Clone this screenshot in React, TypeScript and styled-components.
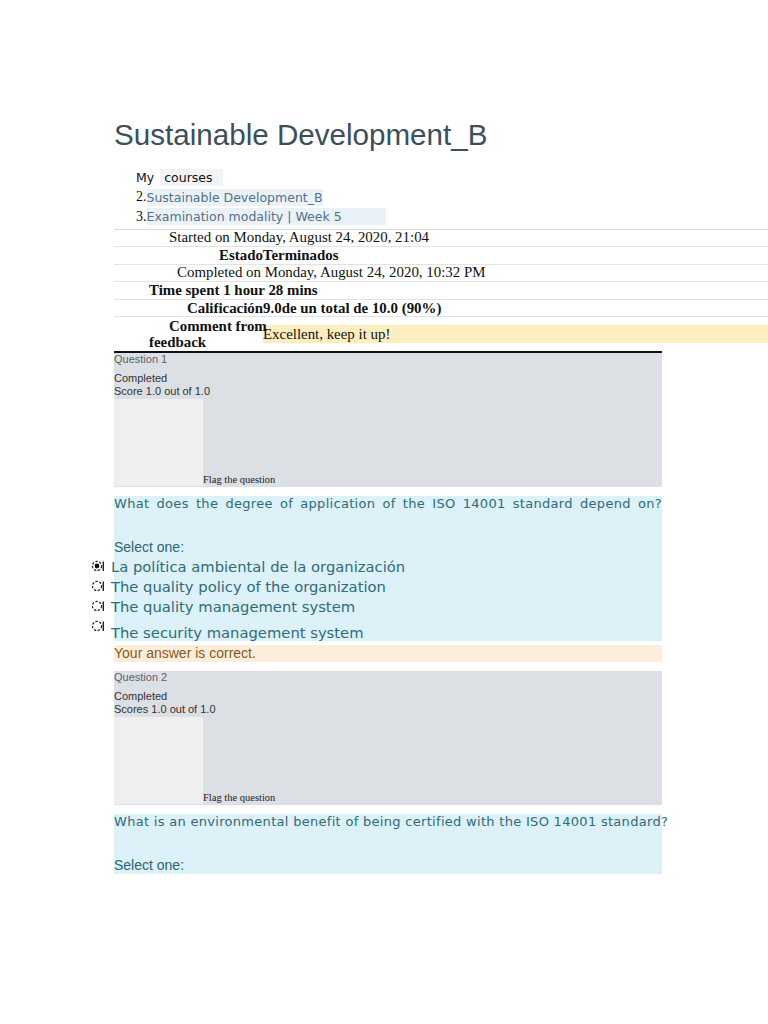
import React from 'react'
import styled, { createGlobalStyle } from 'styled-components'

const GlobalStyle = createGlobalStyle`
  html, body {
    margin: 0;
    padding: 0;
    background: #ffffff;
  }
  body {
    font-family: "Liberation Serif", "Times New Roman", serif;
  }
`

const Page = styled.div`
  width: 768px;
  min-height: 1024px;
  padding: 117px 0 0 114px;
  box-sizing: border-box;
`

const Title = styled.h1`
  margin: 0 0 15px 0;
  font-family: "Liberation Sans", Arial, sans-serif;
  font-weight: 400;
  font-size: 29.6px;
  line-height: 36px;
  color: #3c4f5a;
`

const Crumbs = styled.ol`
  list-style: none;
  margin: 0;
  padding: 0 0 2px 22px;
  border-bottom: 1px solid #dcdcdc;
`

const Crumb = styled.li`
  display: flex;
  align-items: center;
  height: 19.5px;
  font-family: "DejaVu Sans", Verdana, sans-serif;
  font-size: 12.5px;
  color: #111;
`

const CrumbNum = styled.span`
  font-family: "Liberation Serif", serif;
  font-size: 14px;
  color: #111;
`

const CrumbLink = styled.span<{ $pad?: number; $plain?: boolean }>`
  background: ${p => (p.$plain ? '#f1f3f5' : '#eaf2f7')};
  color: ${p => (p.$plain ? '#111' : '#52718c')};
  padding: 1px ${p => p.$pad ?? 0}px 1px ${p => (p.$plain ? 4 : 0)}px;
  margin-left: ${p => (p.$plain ? 6 : 0)}px;
`

const Summary = styled.div`
  display: flex;
  flex-direction: column;
`

const Row = styled.div<{ $indent: number; $bold?: boolean }>`
  display: flex;
  align-items: center;
  height: 16.6px;
  padding-left: ${p => p.$indent}px;
  border-bottom: 1px solid #e3e3e3;
  font-size: 14.9px;
  font-weight: ${p => (p.$bold ? 700 : 400)};
  color: #111;
  white-space: nowrap;
`

const CommentRow = styled.div`
  display: flex;
  align-items: center;
  padding-left: 35px;
  height: 34px;
`

const CommentLabel = styled.div`
  position: relative;
  z-index: 1;
  width: 114px;
  font-size: 14.9px;
  font-weight: 700;
  line-height: 16px;
  text-indent: 20px;
  white-space: nowrap;
  color: #111;
`

const CommentValue = styled.div`
  flex: 1;
  background: #fdeec0;
  height: 18px;
  line-height: 18px;
  font-size: 14.9px;
  color: #111;
`

const QuestionInfo = styled.div<{ $rule?: boolean }>`
  width: 548px;
  height: 134px;
  background: #dcdfe3;
  border-top: ${p => (p.$rule ? '2px solid #111' : 'none')};
  display: flex;
  flex-direction: column;
  font-family: "Liberation Sans", Arial, sans-serif;
  font-size: 11px;
  color: #333;
`

const QNumber = styled.div`
  color: #5b6266;
  line-height: 12px;
  margin-bottom: 7px;
`

const InfoLine = styled.div`
  line-height: 13px;
`

const FlagRow = styled.div`
  display: flex;
  align-items: flex-end;
  margin-top: 1px;
`

const FlagBox = styled.div`
  width: 89px;
  height: 87px;
  background: #efefef;
`

const FlagText = styled.div`
  font-family: "Liberation Serif", serif;
  font-size: 10.5px;
  color: #222;
  line-height: 12px;
`

const QText = styled.div<{ $height: number }>`
  width: 548px;
  height: ${p => p.$height}px;
  margin-top: 9px;
  background: #ddf1f8;
  display: flex;
  flex-direction: column;
`

const Prompt = styled.div<{ $justify?: boolean }>`
  font-family: "DejaVu Sans", Verdana, sans-serif;
  font-size: 13px;
  letter-spacing: 0.3px;
  color: #2f6b7b;
  line-height: 16px;
  white-space: ${p => (p.$justify ? 'normal' : 'nowrap')};
  text-align: ${p => (p.$justify ? 'justify' : 'left')};
  text-align-last: ${p => (p.$justify ? 'justify' : 'auto')};
`

const SelectOne = styled.div`
  font-family: "Liberation Sans", Arial, sans-serif;
  font-size: 14px;
  color: #2c6474;
  margin-top: 27px;
  line-height: 16px;
`

const Options = styled.div`
  margin-left: -24px;
  display: flex;
  flex-direction: column;
  padding-top: 3px;
`

const Option = styled.div<{ $low?: boolean }>`
  display: flex;
  align-items: flex-start;
  height: ${p => (p.$low ? 24 : 20)}px;
`

const RadioBox = styled.div`
  width: 15px;
  height: 16px;
  background: #fff;
  display: flex;
  align-items: center;
  justify-content: center;
  margin-right: 6px;
  flex-shrink: 0;
`

const OptionText = styled.span<{ $low?: boolean }>`
  font-family: "DejaVu Sans", Verdana, sans-serif;
  font-size: 14.75px;
  line-height: 18px;
  color: #2f6b7b;
  margin-top: ${p => (p.$low ? 6 : 0)}px;
`

const Feedback = styled.div`
  width: 548px;
  height: 17px;
  margin-top: 4px;
  background: #fdeedb;
  font-family: "Liberation Sans", Arial, sans-serif;
  font-size: 14px;
  line-height: 17px;
  color: #865a1e;
  margin-bottom: 9px;
`

const Radio = ({ checked }: { checked?: boolean }) => (
  <svg width="14" height="14" viewBox="0 0 14 14">
    <circle
      cx="6"
      cy="7"
      r="4.6"
      fill="none"
      stroke="#222"
      strokeWidth="1.2"
      strokeDasharray="2.4 1.5"
    />
    {checked && <circle cx="6" cy="7" r="2.4" fill="#111" />}
    <line x1="12.3" y1="2.5" x2="12.3" y2="12" stroke="#222" strokeWidth="1.4" />
  </svg>
)

type QuestionProps = {
  number: number
  scoreLabel: string
  rule?: boolean
}

const QuestionHeader = ({ number, scoreLabel, rule }: QuestionProps) => (
  <QuestionInfo $rule={rule}>
    <QNumber>Question {number}</QNumber>
    <InfoLine>Completed</InfoLine>
    <InfoLine>{scoreLabel} 1.0 out of 1.0</InfoLine>
    <FlagRow>
      <FlagBox />
      <FlagText>Flag the question</FlagText>
    </FlagRow>
  </QuestionInfo>
)

const options = [
  'La política ambiental de la organización',
  'The quality policy of the organization',
  'The quality management system',
  'The security management system',
]

const App = () => (
  <>
    <GlobalStyle />
    <Page>
      <Title>Sustainable Development_B</Title>
      <Crumbs>
        <Crumb>
          My<CrumbLink $plain $pad={10}>courses</CrumbLink>
        </Crumb>
        <Crumb>
          <CrumbNum>2.</CrumbNum>
          <CrumbLink>Sustainable Development_B</CrumbLink>
        </Crumb>
        <Crumb>
          <CrumbNum>3.</CrumbNum>
          <CrumbLink $pad={44}>Examination modality | Week 5</CrumbLink>
        </Crumb>
      </Crumbs>
      <Summary>
        <Row $indent={55}>Started on Monday, August 24, 2020, 21:04</Row>
        <Row $indent={105} $bold>
          EstadoTerminados
        </Row>
        <Row $indent={63}>Completed on Monday, August 24, 2020, 10:32 PM</Row>
        <Row $indent={35} $bold>
          Time spent 1 hour 28 mins
        </Row>
        <Row $indent={73} $bold>
          Calificación9.0de un total de 10.0 (90%)
        </Row>
        <CommentRow>
          <CommentLabel>
            Comment from
            <br />
            feedback
          </CommentLabel>
          <CommentValue>Excellent, keep it up!</CommentValue>
        </CommentRow>
      </Summary>

      <QuestionHeader number={1} scoreLabel="Score" rule />
      <QText $height={145}>
        <Prompt $justify>
          What does the degree of application of the ISO 14001 standard depend on?
        </Prompt>
        <SelectOne>Select one:</SelectOne>
        <Options>
          {options.map((o, i) => (
            <Option key={o} $low={i === 3}>
              <RadioBox>
                <Radio checked={i === 0} />
              </RadioBox>
              <OptionText $low={i === 3}>{o}</OptionText>
            </Option>
          ))}
        </Options>
      </QText>
      <Feedback>Your answer is correct.</Feedback>

      <QuestionHeader number={2} scoreLabel="Scores" />
      <QText $height={60}>
        <Prompt>
          What is an environmental benefit of being certified with the ISO 14001 standard?
        </Prompt>
        <SelectOne>Select one:</SelectOne>
      </QText>
    </Page>
  </>
)

export default App
